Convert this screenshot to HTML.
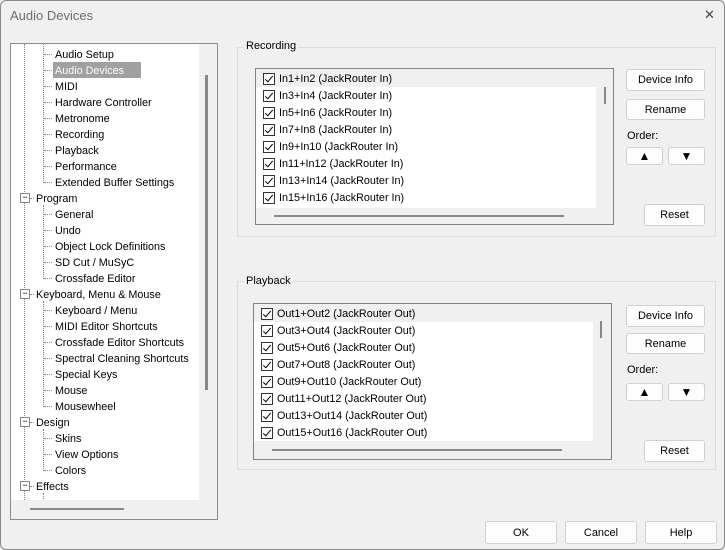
<!DOCTYPE html><html><head><style>
body{margin:0;width:725px;height:550px;background:#f0f0f0;font-family:"Liberation Sans",sans-serif;font-size:10.8px;color:#000;position:relative;overflow:hidden}
.a{position:absolute}
.win{position:absolute;left:0;top:0;width:723px;height:548px;border:1px solid #8a8a8a;border-radius:6px}
.btn{position:absolute;background:#fdfdfd;border:1px solid #d0d0d0;border-radius:3px;text-align:center;box-sizing:border-box;font-size:11px}
.grp{position:absolute;border:1px solid #dcdcdc}
.lbl{position:absolute;background:#f0f0f0;padding:0 2px;font-size:11px}
.tr{position:absolute;height:16px;line-height:16px;white-space:nowrap}
.row{position:absolute;height:17px;line-height:17px;white-space:nowrap;left:0}
.cb{position:absolute;width:10px;height:10px;border:1px solid #333;background:#fff;top:3px;left:7px}
.cb:after{content:"";position:absolute;left:3px;top:0px;width:3px;height:7px;border:solid #000;border-width:0 1.5px 1.5px 0;transform:rotate(40deg)}
.dot{position:absolute;border-top:1px dotted #888;width:8px}
.exp{position:absolute;width:8px;height:8px;border:1px solid #888;background:#fff;font-size:9px;line-height:7px;text-align:center}
.ar{font-size:12px;font-weight:bold}
</style></head><body>
<div class="win"></div>
<div class="a" style="left:10px;top:8px;font-size:13px;color:#6d6d6d">Audio Devices</div>
<div class="a" style="left:704px;top:7px;font-size:13px;color:#444">✕</div>

<div class="a" style="left:10px;top:43px;width:206px;height:475px;border:1px solid #8c8c8c;background:#f0f0f0"></div>
<div class="a" style="left:11px;top:44px;width:188px;height:456px;background:#fff;overflow:hidden">
<div class="a" style="left:13px;top:0;height:456px;border-left:1px dotted #888"></div>
<div class="a" style="left:32px;top:0;height:139px;border-left:1px dotted #888"></div>
<div class="a" style="left:32px;top:161px;height:74px;border-left:1px dotted #888"></div>
<div class="a" style="left:32px;top:257px;height:106px;border-left:1px dotted #888"></div>
<div class="a" style="left:32px;top:385px;height:42px;border-left:1px dotted #888"></div>
<div class="a" style="left:32px;top:449px;height:10px;border-left:1px dotted #888"></div>
</div>
<div class="a" style="left:53px;top:62px;width:88px;height:16px;background:#a0a0a0"></div>
<div id="tree"></div>
<div class="a" style="left:205px;top:75px;width:3px;height:315px;background:#888"></div>
<div class="a" style="left:30px;top:508px;width:94px;height:2px;background:#888"></div>

<div class="grp" style="left:237px;top:47px;width:477px;height:188px"></div>
<div class="lbl" style="left:244px;top:40px">Recording</div>
<div class="a" style="left:255px;top:68px;width:357px;height:155px;border:1px solid #828282;background:#f0f0f0"></div>
<div class="a" style="left:256px;top:70px;width:340px;height:138px;background:#fff;overflow:hidden" id="rec"></div>
<div class="a" style="left:604px;top:87px;width:2px;height:17px;background:#888"></div>
<div class="a" style="left:274px;top:215px;width:290px;height:2px;background:#888"></div>
<div class="btn" style="left:626px;top:69px;width:79px;height:22px;line-height:21px">Device Info</div>
<div class="btn" style="left:626px;top:99px;width:79px;height:21px;line-height:20px">Rename</div>
<div class="a" style="left:627px;top:130px;font-size:11px">Order:</div>
<div class="btn ar" style="left:626px;top:147px;width:37px;height:18px;line-height:16px">▲</div>
<div class="btn ar" style="left:668px;top:147px;width:37px;height:18px;line-height:16px">▼</div>
<div class="btn" style="left:644px;top:204px;width:61px;height:22px;line-height:21px">Reset</div>

<div class="grp" style="left:237px;top:281px;width:477px;height:187px"></div>
<div class="lbl" style="left:244px;top:275px">Playback</div>
<div class="a" style="left:253px;top:303px;width:357px;height:155px;border:1px solid #828282;background:#f0f0f0"></div>
<div class="a" style="left:254px;top:305px;width:339px;height:136px;background:#fff;overflow:hidden" id="play"></div>
<div class="a" style="left:600px;top:321px;width:2px;height:17px;background:#888"></div>
<div class="a" style="left:272px;top:449px;width:290px;height:2px;background:#888"></div>
<div class="btn" style="left:626px;top:305px;width:79px;height:22px;line-height:21px">Device Info</div>
<div class="btn" style="left:626px;top:333px;width:79px;height:21px;line-height:20px">Rename</div>
<div class="a" style="left:627px;top:364px;font-size:11px">Order:</div>
<div class="btn ar" style="left:626px;top:383px;width:37px;height:18px;line-height:16px">▲</div>
<div class="btn ar" style="left:668px;top:383px;width:37px;height:18px;line-height:16px">▼</div>
<div class="btn" style="left:644px;top:440px;width:61px;height:22px;line-height:21px">Reset</div>

<div class="btn" style="left:485px;top:521px;width:72px;height:23px;line-height:22px">OK</div>
<div class="btn" style="left:565px;top:521px;width:72px;height:23px;line-height:22px">Cancel</div>
<div class="btn" style="left:645px;top:521px;width:72px;height:23px;line-height:22px">Help</div>
<script>
var t=[[2,"Audio Setup"],[2,"Audio Devices"],[2,"MIDI"],[2,"Hardware Controller"],[2,"Metronome"],[2,"Recording"],[2,"Playback"],[2,"Performance"],[2,"Extended Buffer Settings"],[1,"Program"],[2,"General"],[2,"Undo"],[2,"Object Lock Definitions"],[2,"SD Cut / MuSyC"],[2,"Crossfade Editor"],[1,"Keyboard, Menu & Mouse"],[2,"Keyboard / Menu"],[2,"MIDI Editor Shortcuts"],[2,"Crossfade Editor Shortcuts"],[2,"Spectral Cleaning Shortcuts"],[2,"Special Keys"],[2,"Mouse"],[2,"Mousewheel"],[1,"Design"],[2,"Skins"],[2,"View Options"],[2,"Colors"],[1,"Effects"],[2,"Dithering"]];
var h="";t.forEach(function(e,i){var y=46+i*16;if(y>490)return;var ty=y+1;
if(e[0]==2){h+='<div class="dot" style="left:44px;top:'+(y+8)+'px"></div><div class="tr" style="left:55px;top:'+ty+'px;'+(i==1?'color:#fff':'')+'">'+e[1]+'</div>';}
else{h+='<div class="exp" style="left:20px;top:'+(y+3)+'px">−</div><div class="dot" style="left:30px;top:'+(y+8)+'px;width:4px"></div><div class="tr" style="left:36px;top:'+ty+'px">'+e[1].replace("&","&amp;")+'</div>';}});
h+='<div class="a" style="left:11px;top:500px;width:188px;height:18px;background:#f0f0f0"></div>';
document.getElementById("tree").innerHTML=h;
function L(id,f,s){var h="";for(var i=0;i<8;i++){var a=2*i+1,b=2*i+2;h+='<div class="row" style="top:'+(i*17)+'px;width:100%;'+(i==0?'background:#f0f0f0':'')+'"><div class="cb"></div><div class="a" style="left:23px;top:1px">'+f+a+'+'+f+b+' (JackRouter '+s+')</div></div>';}document.getElementById(id).innerHTML=h;}
L("rec","In","In");L("play","Out","Out");
</script>
</body></html>
